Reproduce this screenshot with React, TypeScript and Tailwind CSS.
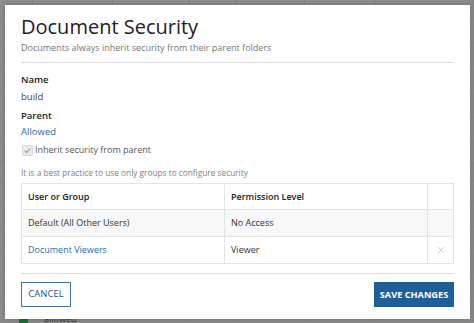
import React from "react";

function BackgroundPage() {
  const cols = [33, 80, 77, 47, 68, 70, 99];
  return (
    <div className="h-[323px] w-[474px] overflow-hidden bg-[#8c8c8c]">
      {Array.from({ length: 14 }).map((_, r) => (
        <div key={r} className="flex h-[23px] border-b border-[#858585]">
          {cols.map((w, c) => (
            <div
              key={c}
              className="h-full border-r border-[#7e7e7e]"
              style={{ width: w }}
            />
          ))}
        </div>
      ))}
    </div>
  );
}

function CheckIcon() {
  return (
    <svg viewBox="0 0 12 12" className="h-[11px] w-[11px]">
      <rect x="0.5" y="0.5" width="11" height="11" rx="1.5" fill="#e9e9e9" stroke="#d4d4d4" />
      <path d="M3 6.2 L5 8.2 L9 3.8" fill="none" stroke="#a9a9a9" strokeWidth="1.3" />
    </svg>
  );
}

export default function App() {
  return (
    <div className="relative h-[323px] w-[474px] overflow-hidden font-['Open_Sans',sans-serif]">
      <BackgroundPage />

      {/* peek of page content below modal */}
      <div className="absolute left-[19px] top-[318px] h-[6px] w-[9px] bg-[#1e6b3a]" />
      <div className="absolute left-[44px] top-[313px] text-[9px] leading-[12px] text-[#333]">
        allowed
      </div>

      {/* modal */}
      <div className="absolute left-[5px] top-[5px] w-[465px] bg-white px-4 pb-[12px] pt-[8px] shadow-[0_0_4px_rgba(0,0,0,0.25)]">
        <div className="border-b border-[#dcdcdc] pb-[7px]">
          <h1 className="text-[20px] leading-[28px] text-[#222]">Document Security</h1>
          <p className="text-[9px] leading-[14px] text-[#777]">
            Documents always inherit security from their parent folders
          </p>
        </div>

        <div className="mt-[9px] text-[9.5px] font-semibold leading-[16px] text-[#222]">Name</div>
        <div className="mt-[1px] text-[9.5px] leading-[16px] text-[#444]">build</div>
        <div className="mt-[3px] text-[9.5px] font-semibold leading-[16px] text-[#222]">Parent</div>
        <div className="text-[9.5px] leading-[16px] text-[#2d6aa4]">Allowed</div>

        <div className="mt-[2px] flex h-[16px] items-center gap-[2px] pl-[1px]">
          <CheckIcon />
          <span className="text-[9px] text-[#555]">Inherit security from parent</span>
        </div>

        <div className="mt-[8px] text-[8.3px] leading-[14px] text-[#808080]">
          It is a best practice to use only groups to configure security
        </div>

        <div className="mt-[3px] grid grid-cols-[203px_203px_1fr] border border-[#e4e4e4] text-[9px] text-[#333]">
          <div className="flex h-[25px] items-center border-r border-[#e4e4e4] px-[6px] font-semibold text-[#222]">
            User or Group
          </div>
          <div className="flex h-[25px] items-center border-r border-[#e4e4e4] px-[6px] font-semibold text-[#222]">
            Permission Level
          </div>
          <div className="h-[25px]" />

          <div className="flex h-[27px] items-center border-r border-t border-[#e4e4e4] bg-[#f8f8f8] px-[6px]">
            Default (All Other Users)
          </div>
          <div className="flex h-[27px] items-center border-r border-t border-[#e4e4e4] bg-[#f8f8f8] px-[6px]">
            No Access
          </div>
          <div className="h-[27px] border-t border-[#e4e4e4] bg-[#f8f8f8]" />

          <div className="flex h-[27px] items-center border-r border-t border-[#e4e4e4] px-[6px] text-[#2d6aa4]">
            Document Viewers
          </div>
          <div className="flex h-[27px] items-center border-r border-t border-[#e4e4e4] px-[6px]">
            Viewer
          </div>
          <div className="flex h-[27px] items-center justify-center border-t border-[#e4e4e4]">
            <svg viewBox="0 0 10 10" className="h-[8px] w-[8px]">
              <path d="M1 1 L9 9 M9 1 L1 9" stroke="#cfcfcf" strokeWidth="1.2" />
            </svg>
          </div>
        </div>

        <div className="mt-[9px] flex items-center justify-between border-t border-[#dcdcdc] pt-[8px]">
          <button className="h-[25px] w-[50px] border border-[#3f73a8] text-[9.5px] text-[#245582]">
            CANCEL
          </button>
          <button className="h-[25px] w-[80px] bg-[#1f5e98] text-[9.2px] font-bold text-white">
            SAVE CHANGES
          </button>
        </div>
      </div>
    </div>
  );
}
